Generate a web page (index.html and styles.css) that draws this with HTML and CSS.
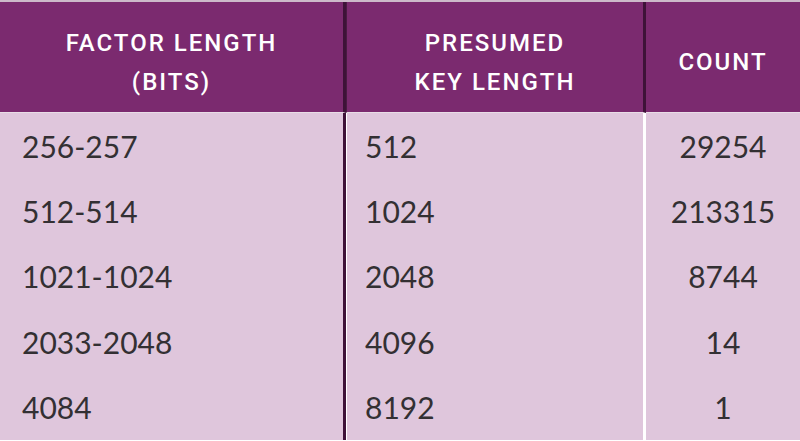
FILE: index.html
```html
<!DOCTYPE html>
<html>
<head>
<meta charset="utf-8">
<link rel="stylesheet" href="styles.css">
</head>
<body>
<div class="table">
  <div class="head h1">FACTOR LENGTH<br>(BITS)</div>
  <div class="head h2">PRESUMED<br>KEY LENGTH</div>
  <div class="head h3">COUNT</div>

  <div class="cell c1">256-257</div>
  <div class="cell c2">512</div>
  <div class="cell c3">29254</div>

  <div class="cell c1">512-514</div>
  <div class="cell c2">1024</div>
  <div class="cell c3">213315</div>

  <div class="cell c1">1021-1024</div>
  <div class="cell c2">2048</div>
  <div class="cell c3">8744</div>

  <div class="cell c1">2033-2048</div>
  <div class="cell c2">4096</div>
  <div class="cell c3">14</div>

  <div class="cell c1">4084</div>
  <div class="cell c2">8192</div>
  <div class="cell c3">1</div>
</div>
</body>
</html>
```

FILE: styles.css
```css
* {
  box-sizing: border-box;
}

html, body {
  margin: 0;
  padding: 0;
  background: #ffffff;
}

.table {
  display: grid;
  grid-template-columns: 346px 300px 154px;
  grid-template-rows: 111px repeat(5, 1fr);
  width: 800px;
  height: 440px;
  border-top: 2px solid #cdb9ca;
}

.head {
  background: #7b2a6f;
  color: #ffffff;
  font-family: "Roboto", sans-serif;
  font-weight: 500;
  font-size: 24px;
  letter-spacing: 2px;
  line-height: 39px;
  display: flex;
  align-items: center;
  justify-content: center;
  text-align: center;
  padding-top: 11px;
  border-bottom: 1px solid #e8dde6;
}

.h1 {
  border-right: 3px solid #3e1238;
}

.h2 {
  border-left: 1px solid #4a1a43;
  border-right: 3px solid #3e1238;
}

.cell {
  background: #dfc6dc;
  color: #333033;
  font-family: "Lato", "Open Sans", sans-serif;
  font-size: 30px;
  display: flex;
  align-items: center;
}

.c1 {
  padding-left: 22px;
  border-right: 3px solid #3e1238;
}

.c2 {
  padding-left: 18px;
  border-left: 1px solid #ffffff;
  border-right: 3px solid #ffffff;
}

.c3 {
  justify-content: center;
}
```
